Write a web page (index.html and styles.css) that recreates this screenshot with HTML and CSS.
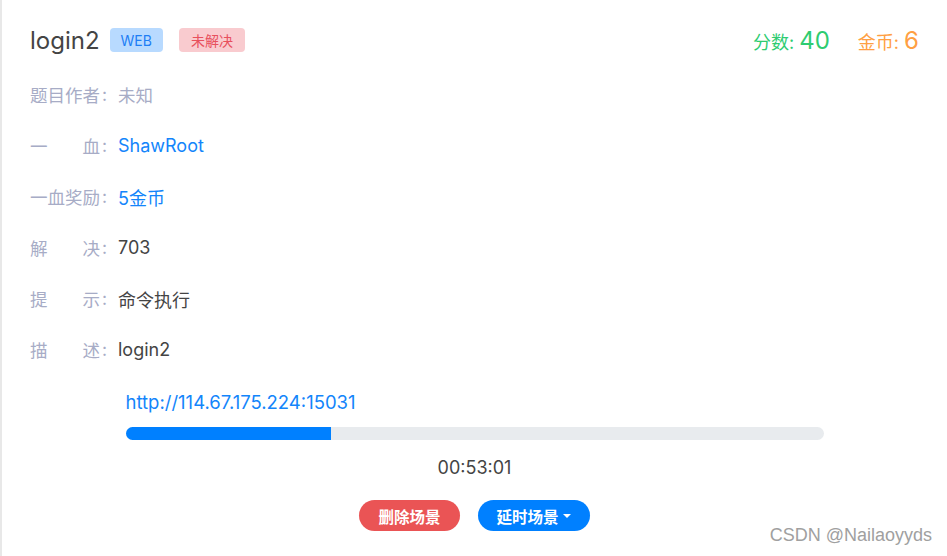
FILE: index.html
```html
<!DOCTYPE html>
<html lang="zh-CN">
<head>
    <meta charset="UTF-8">
    <title>login2</title>
    <link rel="stylesheet" href="styles.css">
</head>
<body>
    <div class="card">
        <div class="card-head">
            <div class="title">
                <h1>login2</h1>
                <span class="badge badge-web">WEB</span>
                <span class="badge badge-todo">未解决</span>
            </div>
            <div class="stats">
                <span class="score">分数: <b>40</b></span>
                <span class="coin">金币: <b>6</b></span>
            </div>
        </div>

        <div class="info">
            <div class="info-row"><span class="label">题目作者</span><span class="colon">:</span><span class="value muted">未知</span></div>
            <div class="info-row"><span class="label">一血</span><span class="colon">:</span><span class="value link">ShawRoot</span></div>
            <div class="info-row"><span class="label">一血奖励</span><span class="colon">:</span><span class="value link">5金币</span></div>
            <div class="info-row"><span class="label">解决</span><span class="colon">:</span><span class="value">703</span></div>
            <div class="info-row"><span class="label">提示</span><span class="colon">:</span><span class="value">命令执行</span></div>
            <div class="info-row"><span class="label">描述</span><span class="colon">:</span><span class="value">login2</span></div>
        </div>

        <div class="scene">
            <a class="scene-url" href="#">http://114.67.175.224:15031</a>
            <div class="progress"><div class="progress-bar" style="width: 29.5%"></div></div>
            <div class="timer">00:53:01</div>
            <div class="actions">
                <button class="btn btn-danger">删除场景</button>
                <button class="btn btn-primary">延时场景<span class="caret"></span></button>
            </div>
        </div>
    </div>
    <div class="watermark">CSDN @Nailaoyyds</div>
</body>
</html>
```

FILE: styles.css
```css
/* 全体 */
html, body {
    height: 100%;
}

body {
    margin: 0;
    font-family: Inter, "Noto Sans CJK SC", sans-serif;
    color: #444;
    background: #fff;
    border-left: 2px solid #e8e8e8;
    box-sizing: border-box;
    position: relative;
}

.card {
    padding: 22px 28px 0 28px;
}

/* ヘッダー */
.card-head {
    display: flex;
    justify-content: space-between;
    align-items: center;
    height: 36px;
}

.title {
    display: flex;
    align-items: center;
}

h1 {
    margin: 0 10px 0 0;
    font-size: 24px;
    font-weight: 400;
    color: #444;
}

.badge {
    display: inline-flex;
    align-items: center;
    height: 24px;
    padding: 0 11px;
    border-radius: 4px;
    font-size: 14px;
}

.badge-web {
    background: #b8daff;
    color: #1e7ef5;
    margin-right: 16px;
}

.badge-todo {
    background: #f9cbcf;
    color: #e8505d;
    padding: 0 12px;
}

.stats {
    display: flex;
    align-items: baseline;
    gap: 28px;
    font-size: 18px;
}

.stats b {
    font-weight: 400;
    font-size: 24px;
}

.score {
    color: #2ecc71;
}

.coin {
    color: #ff9f43;
}

/* 情報 */
.info {
    margin-top: 11px;
}

.info-row {
    display: flex;
    align-items: center;
    height: 51px;
    font-size: 17.5px;
}

.label {
    width: 70px;
    color: #a7acc6;
    text-align: justify;
    text-align-last: justify;
}

.colon {
    color: #a7acc6;
    width: 16px;
    padding-left: 2px;
}

.value {
    font-size: 18px;
}

.value.muted {
    color: #a7acc6;
    font-size: 17.5px;
}

.value.link {
    color: #1385fb;
}

/* シーン */
.scene {
    width: 698px;
    margin: 15px auto 0;
    display: flex;
    flex-direction: column;
}

.scene-url {
    color: #1385fb;
    text-decoration: none;
    font-size: 18.5px;
    line-height: 24px;
}

.progress {
    margin-top: 13px;
    height: 13px;
    border-radius: 7px;
    background: #e8ebee;
    overflow: hidden;
}

.progress-bar {
    height: 100%;
    background: #0080ff;
}

.timer {
    text-align: center;
    font-size: 18px;
    line-height: 24px;
    margin-top: 16px;
}

.actions {
    display: flex;
    justify-content: center;
    gap: 18px;
    margin-top: 20px;
}

.btn {
    height: 31px;
    border: none;
    border-radius: 16px;
    color: #fff;
    font-family: inherit;
    font-size: 15.5px;
    font-weight: 700;
    cursor: pointer;
    display: inline-flex;
    align-items: center;
}

.btn-danger {
    background: #ea5455;
    padding: 0 19px;
}

.btn-primary {
    background: #0080ff;
    padding: 0 19px;
}

.caret {
    display: inline-block;
    margin-left: 4px;
    border-top: 4px solid #fff;
    border-left: 4px solid transparent;
    border-right: 4px solid transparent;
}

/* 透かし */
.watermark {
    position: absolute;
    right: 15px;
    bottom: 10px;
    font-family: "Liberation Sans", Arial, sans-serif;
    font-size: 18px;
    color: #a0a0a0;
}
```
